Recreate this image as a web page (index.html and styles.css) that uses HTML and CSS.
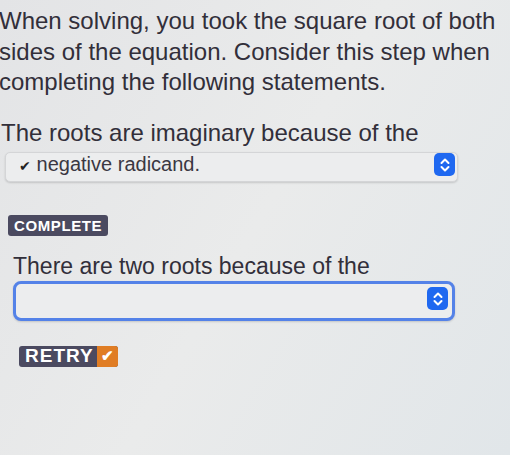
FILE: index.html
```html
<!DOCTYPE html>
<html lang="en">
<head>
    <meta charset="UTF-8">
    <title>Square Root Step</title>
    <link rel="stylesheet" href="styles.css">
</head>
<body>
    <div class="page">
        <p class="prompt">When solving, you took the square root of both sides of the equation. Consider this step when completing the following statements.</p>

        <div class="question first">
            <p class="statement">The roots are imaginary because of the</p>
            <div class="select">
                <span class="choice"><span class="tick">&#10004;</span> negative radicand.</span>
                <span class="stepper">
                    <svg width="12" height="16" viewBox="0 0 12 16"><path d="M2.5 6 L6 2.5 L9.5 6 M2.5 10 L6 13.5 L9.5 10" fill="none" stroke="#fff" stroke-width="2" stroke-linecap="round" stroke-linejoin="round"/></svg>
                </span>
            </div>
            <span class="badge complete">COMPLETE</span>
        </div>

        <div class="question second">
            <p class="statement">There are two roots because of the</p>
            <div class="select focused">
                <span class="choice"></span>
                <span class="stepper">
                    <svg width="12" height="16" viewBox="0 0 12 16"><path d="M2.5 6 L6 2.5 L9.5 6 M2.5 10 L6 13.5 L9.5 10" fill="none" stroke="#fff" stroke-width="2" stroke-linecap="round" stroke-linejoin="round"/></svg>
                </span>
            </div>
            <span class="badge retry">RETRY<span class="retry-check">&#10004;</span></span>
        </div>
    </div>
</body>
</html>
```

FILE: styles.css
```css
body {
    margin: 0;
    background: linear-gradient(120deg, #e3e4e6 0%, #eaebeb 50%, #e1e6e9 100%);
    font-family: "Liberation Sans", Arial, sans-serif;
    color: #322f3a;
    height: 455px;
    overflow: hidden;
}

.page {
    padding: 6px 0 0 0;
}

.prompt {
    margin: 0 0 0 -1px;
    font-size: 24px;
    line-height: 30.5px;
    width: 505px;
}

.question {
    display: flex;
    flex-direction: column;
    align-items: flex-start;
}

.statement {
    margin: 0;
    font-size: 24px;
    line-height: 26px;
}

.first {
    margin-top: 22px;
    padding-left: 1px;
}

.second {
    margin-top: 18px;
    padding-left: 13px;
}

.second .statement {
    font-size: 23px;
    line-height: 24px;
}

.select {
    display: flex;
    align-items: center;
    justify-content: space-between;
    box-sizing: border-box;
    height: 30px;
    width: 453px;
    margin-top: 6px;
    margin-left: 4px;
    padding: 0 2px 4px 13px;
    background: #ecedee;
    border: 1px solid #d4d5d7;
    border-radius: 5px;
    box-shadow: 0 1px 2px rgba(0, 0, 0, 0.15);
}

.focused {
    height: 40px;
    width: 442px;
    margin-top: 3px;
    margin-left: 0;
    padding: 0 4px 4px 14px;
    border: 3px solid #5482e8;
    border-radius: 8px;
}

.choice {
    font-size: 20px;
    color: #3a3742;
}

.tick {
    font-size: 14px;
    color: #222;
}

.stepper {
    display: flex;
    align-items: center;
    justify-content: center;
    width: 21px;
    height: 23px;
    background: #1f68f0;
    border-radius: 5px;
}

.badge {
    display: inline-flex;
    align-items: center;
    background: #4b4a60;
    color: #fff;
    font-weight: bold;
    border-radius: 3px;
}

.complete {
    margin-top: 33px;
    margin-left: 7px;
    height: 21px;
    padding: 0 6px;
    font-size: 15px;
    letter-spacing: 0.6px;
}

.retry {
    margin-top: 25px;
    margin-left: 6px;
    height: 21px;
    padding-left: 6px;
    font-size: 19px;
    letter-spacing: 1px;
    overflow: hidden;
}

.retry-check {
    display: flex;
    align-items: center;
    justify-content: center;
    width: 21px;
    height: 21px;
    margin-left: 3px;
    background: #e07d24;
    font-size: 15px;
    letter-spacing: 0;
}
```
